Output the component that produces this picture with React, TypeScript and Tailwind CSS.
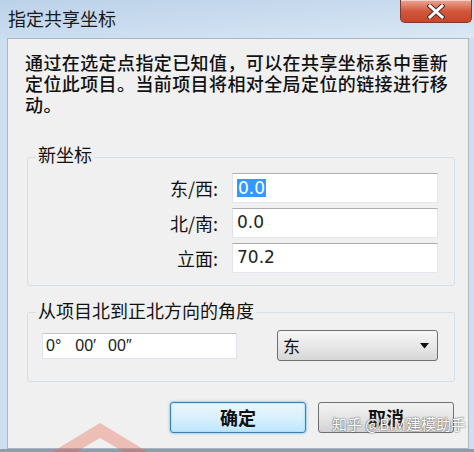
export default function App() {
  const inputBase =
    "h-[30px] w-[206px] bg-white border border-[#e2e3ea] border-t-[#abadb3] border-b-[#e3e9ef] flex items-center pl-[4px] text-[17px] text-[#222] font-['DejaVu_Sans',sans-serif]";
  return (
    <div className="relative w-[474px] h-[452px] overflow-hidden bg-[#cfdff0] font-['Noto_Sans_CJK_SC',sans-serif] text-[#111]">
      {/* Title bar */}
      <div className="flex h-[38px] items-start bg-linear-to-br from-[#bcd2e9] via-[#cadcef] to-[#dbe8f4]">
        <div className="pl-[8px] pt-[7px] text-[18px] leading-[22px] text-[#1a1a1a]">指定共享坐标</div>
        <div className="ml-auto mr-[2px] flex h-[23px] w-[72px] items-center justify-center rounded-b-[5px] border border-t-0 border-[#7b3a2d] bg-linear-to-b from-[#e9a796] via-[#d2573c] to-[#c8452a] shadow-[inset_0_1px_0_rgba(255,255,255,0.5)]">
          <svg width="18" height="15" viewBox="0 0 18 15">
            <path d="M3 2 L15 13 M15 2 L3 13" stroke="#5a2a20" strokeWidth="5" strokeLinecap="square" />
            <path d="M3 2 L15 13 M15 2 L3 13" stroke="#ffffff" strokeWidth="3" strokeLinecap="square" />
          </svg>
        </div>
      </div>

      {/* Panel */}
      <div className="ml-[7px] h-[411px] w-[462px] border border-[#a9b6c4] bg-[#f0f0f0]">
        <div className="ml-[17px] mt-[13px] whitespace-nowrap text-[18px] leading-[21px] tracking-[0.4px] font-medium">
          通过在选定点指定已知值，可以在共享坐标系中重新
          <br />
          定位此项目。当前项目将相对全局定位的链接进行移
          <br />
          动。
        </div>

        {/* Group 1 */}
        <div className="relative ml-[19px] mt-[42px] w-[428px] rounded-[3px] border border-[#d5dfe5] pb-[12px] pr-[16px] pt-[15px]">
          <span className="absolute left-[8px] top-[-14px] bg-[#f0f0f0] px-[2px] text-[18px] leading-[20px]">新坐标</span>
          <div className="flex flex-col gap-[5px]">
            <div className="flex items-center justify-end">
              <span className="mr-[14px] text-[18px]">东/西:</span>
              <div className={inputBase + " border-[#b5cfe7] border-t-[#7a9fc4]"}>
                <span className="bg-[#3399ff] px-[1px] leading-[18px] text-white">0.0</span>
              </div>
            </div>
            <div className="flex items-center justify-end">
              <span className="mr-[14px] text-[18px]">北/南:</span>
              <div className={inputBase}>0.0</div>
            </div>
            <div className="flex items-center justify-end">
              <span className="mr-[14px] text-[18px]">立面:</span>
              <div className={inputBase}>70.2</div>
            </div>
          </div>
        </div>

        {/* Group 2 */}
        <div className="relative ml-[19px] mt-[26px] w-[428px] rounded-[3px] border border-[#d5dfe5] pb-[20px] pl-[14px] pr-[16px] pt-[17px]">
          <span className="absolute left-[8px] top-[-13px] bg-[#f0f0f0] px-[2px] text-[18px] leading-[20px]">从项目北到正北方向的角度</span>
          <div className="flex h-[31px] items-center justify-between">
            <div className="flex h-[26px] w-[195px] items-center border border-[#e2e3ea] border-t-[#c4c6cc] bg-white pl-[3px] text-[16px] font-['Liberation_Sans',sans-serif] text-[#222]">
              <span>0°</span>
              <span className="ml-[14px]">00′</span>
              <span className="ml-[12px]">00″</span>
            </div>
            <div className="flex h-[31px] w-[161px] items-center justify-between rounded-[3px] border border-[#707070] bg-linear-to-b from-[#f6f6f6] via-[#e8e8e8] to-[#d6d6d6] pl-[5px] pr-[8px]">
              <span className="text-[17px]">东</span>
              <svg width="9" height="6" viewBox="0 0 9 6">
                <path d="M0 0 L9 0 L4.5 5.5 Z" fill="#111" />
              </svg>
            </div>
          </div>
        </div>

        {/* Buttons */}
        <div className="mt-[20px] flex justify-end gap-[12px] pr-[14px]">
          <div className="flex h-[31px] w-[136px] items-center justify-center rounded-[3px] border border-[#3c7fb1] bg-linear-to-b from-[#eaf6fd] via-[#d9f0fc] to-[#bee6fd] text-[18px] font-semibold shadow-[0_0_3px_#58aee6,inset_0_0_2px_#7fd0f5]">
            确定
          </div>
          <div className="flex h-[31px] w-[136px] items-center justify-center rounded-[3px] border border-[#707070] bg-linear-to-b from-[#f2f2f2] via-[#e6e6e6] to-[#d2d2d2] text-[18px] font-semibold">
            取消
          </div>
        </div>
      </div>
      <div className="h-[3px] bg-[#8f9cab]" />

      {/* Watermark */}
      <svg className="absolute left-0 top-[418px]" width="200" height="34" viewBox="0 0 200 34">
        <polygon points="52,34 100,5 148,34 124,34 100,20 76,34" fill="#e8604a" opacity="0.35" />
      </svg>
      <div className="absolute left-[332px] top-[414px] text-[15px] leading-[20px] text-white [text-shadow:0_0_1px_#555,0_0_2px_#666]">
        知乎 @BIM建模助手
      </div>
    </div>
  );
}
